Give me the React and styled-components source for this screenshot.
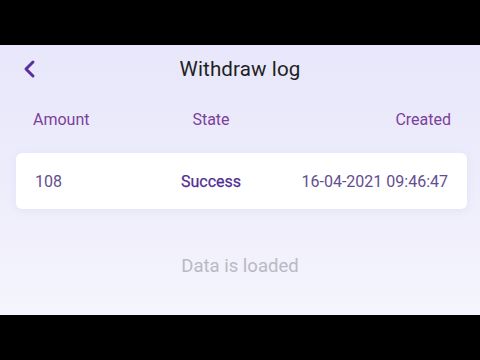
import React from "react";
import styled, { createGlobalStyle } from "styled-components";

const GlobalStyle = createGlobalStyle`
  html, body { margin: 0; padding: 0; background: #000; }
  body { font-family: Roboto, "Noto Sans", "Liberation Sans", sans-serif; }
`;

const Strings = {
  title: "Withdraw log",
  amount: "Amount",
  state: "State",
  created: "Created",
  loaded: "Data is loaded",
};

const rows = [{ id: 1, amount: "108", state: "Success", created: "16-04-2021 09:46:47" }];

const App = () => (
  <>
    <GlobalStyle />
    <Frame>
      <Letterbox />
      <Screen>
        <NavBar>
          <BackBtn aria-label="back">
            <svg width="14" height="20" viewBox="0 0 14 20">
              <polyline
                points="11,3 4,10 11,17"
                fill="none"
                stroke="#5a2ea0"
                strokeWidth="3"
                strokeLinecap="round"
                strokeLinejoin="round"
              />
            </svg>
          </BackBtn>
          <Title>{Strings.title}</Title>
        </NavBar>
        <HeadRow>
          <HeadCell>{Strings.amount}</HeadCell>
          <HeadCell center>{Strings.state}</HeadCell>
          <HeadCell right>{Strings.created}</HeadCell>
        </HeadRow>
        {rows.map((r) => (
          <Card key={r.id}>
            <Cell>{r.amount}</Cell>
            <Cell center strong>
              {r.state}
            </Cell>
            <Cell right>{r.created}</Cell>
          </Card>
        ))}
        <Footer>{Strings.loaded}</Footer>
      </Screen>
      <Letterbox />
    </Frame>
  </>
);

const Frame = styled.div`
  width: 480px;
  height: 360px;
  display: flex;
  flex-direction: column;
  background: #000;
  overflow: hidden;
`;
const Letterbox = styled.div`
  height: 45px;
  flex: none;
  background: #000;
`;
const Screen = styled.div`
  flex: 1;
  display: flex;
  flex-direction: column;
  background: linear-gradient(180deg, #e8e7fb 0%, #eeedfb 55%, #f5f5fd 100%);
`;
const NavBar = styled.div`
  height: 48px;
  display: flex;
  align-items: center;
  justify-content: center;
  position: relative;
`;
const BackBtn = styled.div`
  position: absolute;
  left: 22px;
  top: 14px;
  display: flex;
`;
const Title = styled.div`
  font-size: 20.6px;
  color: #1f1f24;
  letter-spacing: 0.1px;
`;
const Columns = styled.div`
  display: grid;
  grid-template-columns: 118px 120px 1fr;
  align-items: center;
`;
const HeadRow = styled(Columns)`
  height: 52px;
  padding: 0 29px 0 33px;
`;
const HeadCell = styled.div`
  font-size: 16px;
  color: #7b3f9c;
  text-align: ${({ center, right }) => (center ? "center" : right ? "right" : "left")};
`;
const Card = styled(Columns)`
  margin: 8px 13px 0 16px;
  height: 56px;
  padding: 0 19px 0 19px;
  background: #fff;
  border-radius: 6px;
  box-shadow: 0 2px 8px rgba(110, 100, 200, 0.08);
  grid-template-columns: 116px 120px 1fr;
`;
const Cell = styled.div`
  font-size: 16px;
  color: ${({ strong }) => (strong ? "#4f2d92" : "#634e8f")};
  -webkit-text-stroke: ${({ strong }) => (strong ? "0.25px #4f2d92" : "0")};
  text-align: ${({ center, right }) => (center ? "center" : right ? "right" : "left")};
`;
const Footer = styled.div`
  margin-top: 46px;
  text-align: center;
  font-size: 18.5px;
  color: #b9b9c6;
`;

export default App;
